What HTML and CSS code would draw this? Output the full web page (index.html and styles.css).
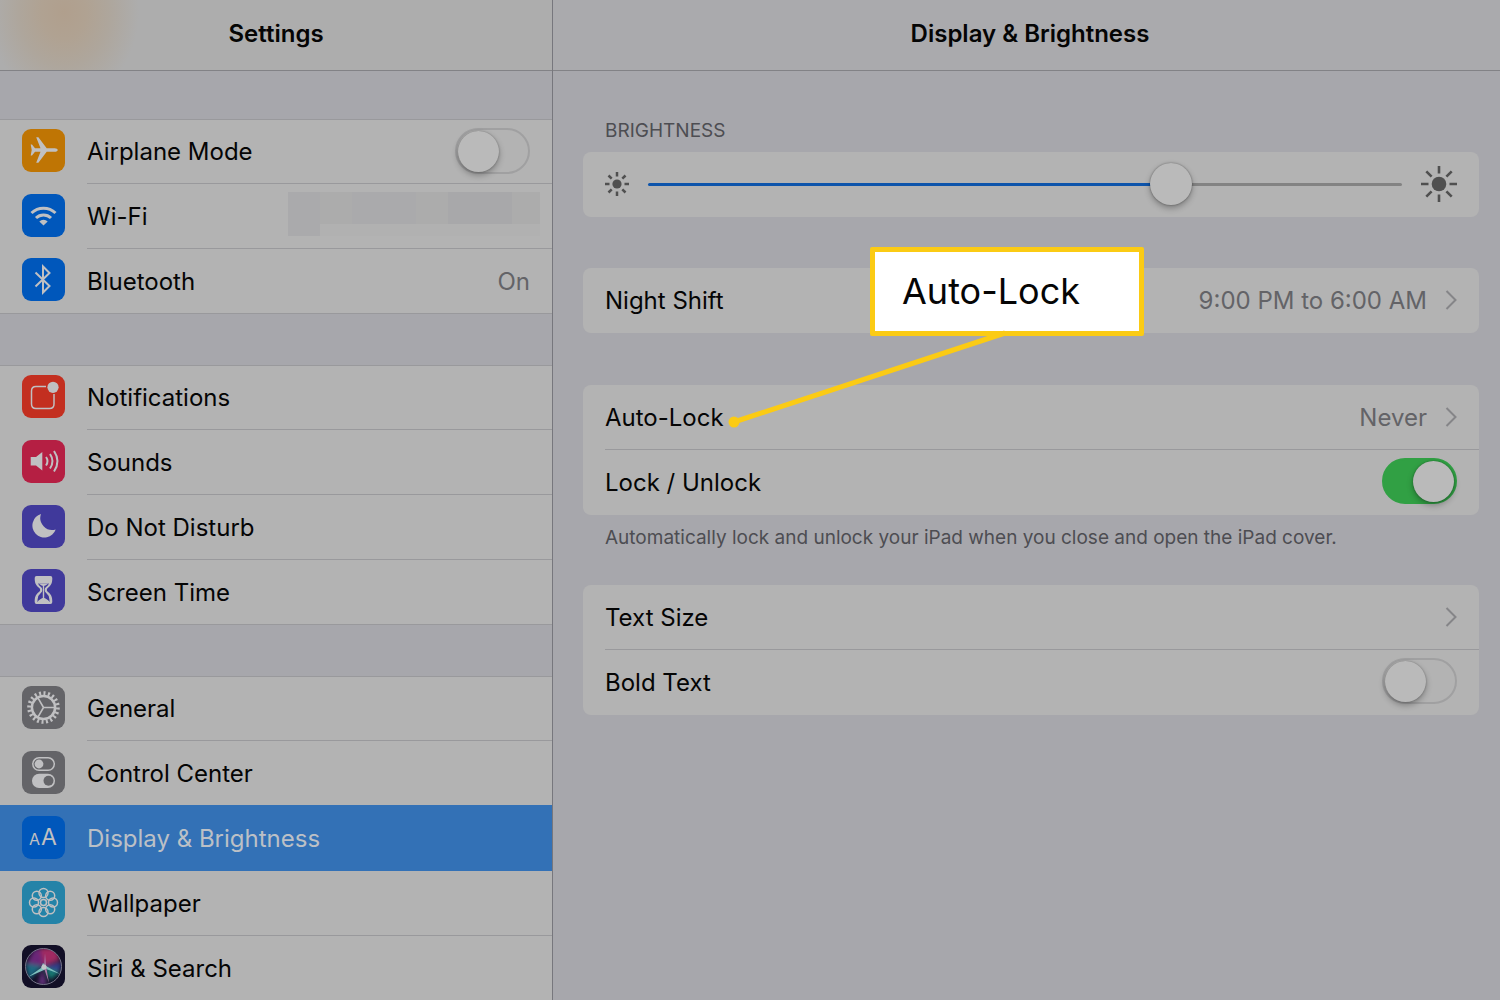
FILE: index.html
```html
<!DOCTYPE html>
<html lang="en">
<head>
<meta charset="utf-8">
<meta name="viewport" content="width=device-width, initial-scale=1">
<title>Settings</title>
<link rel="stylesheet" href="styles.css">
</head>
<body>
<div class="app">
  <aside class="sidebar">
    <header class="bar bar-left"><h1>Settings</h1></header>
    <nav class="menu">
      <section class="group">
        <div class="row">
          <svg class="icon orange" viewBox="0 0 43 43"><path d="M35.700 21c0 1.100-1.200 1.800-3 1.800h-8L16.400 33.700h-2.200L18.500 22.800h-5.500l-3 3.700H8.700l1-5.500-1-5.500H10l3 3.700h5.500L14.200 8.300h2.200L24.700 19.200h8c1.800 0 3 .7 3 1.800z"/></svg>
          <div class="line"><label for="airplane">Airplane Mode</label><input class="switch" type="checkbox" id="airplane"></div>
        </div>
        <a class="row" href="#wifi">
          <svg class="icon blue" viewBox="0 0 43 43"><g class="stroke s3"><path d="M9.500 19a17.500 17.500 0 0 1 24 0M14 24a10.800 10.800 0 0 1 15 0"/></g><path d="M17.300 27.500a6 6 0 0 1 8.400 0L21.500 31.500z"/></svg>
          <div class="line"><span>Wi-Fi</span><span class="mosaic"><i class="m2"></i><i class="m1"></i><i class="m2"></i><i class="m2"></i><i class="m1"></i><i class="m3"></i><i class="m3"></i><i class="m1"></i></span></div>
        </a>
        <a class="row" href="#bluetooth">
          <svg class="icon blue" viewBox="0 0 43 43"><path class="stroke s2" d="M13.500 14.500l14 13.500-6.500 6.500v-26l6.500 6.500-14 13.500"/></svg>
          <div class="line"><span>Bluetooth</span><span class="value">On</span></div>
        </a>
      </section>
      <section class="group">
        <a class="row" href="#notifications">
          <svg class="icon red" viewBox="0 0 43 43"><path class="stroke s1" d="M24 11.500h-10q-4.500 0-4.500 4.500v13q0 4.500 4.500 4.500h13.500q4.500 0 4.500-4.500v-10"/><circle cx="31" cy="12.300" r="5.600"/></svg>
          <div class="line"><span>Notifications</span></div>
        </a>
        <a class="row" href="#sounds">
          <svg class="icon pink" viewBox="0 0 43 43"><path d="M8.700 17h5.300l6.300-5v18.500l-6.300-5H8.700z"/><path class="stroke s2" d="M24 17q3 4 0 8.500M28 14q5 7.200 0 14.500M32 11q7 10.200 0 20.500"/></svg>
          <div class="line"><span>Sounds</span></div>
        </a>
        <a class="row" href="#dnd">
          <svg class="icon purple" viewBox="0 0 43 43"><path d="M19 9a12 12 0 1 0 14.700 15.500A12 12 0 0 1 19 9z"/></svg>
          <div class="line"><span>Do Not Disturb</span></div>
        </a>
        <a class="row" href="#screentime">
          <svg class="icon purple" viewBox="0 0 43 43"><path fill-rule="evenodd" d="M14.500 7h14q1.800 0 1.800 2c0 5.500-1.300 7.500-4.300 9.700q-2.400 2.200 0 4.400c3 2.200 4.300 4.400 4.300 9.900q0 2-1.800 2h-14q-1.800 0-1.800-2c0-5.500 1.300-7.700 4.300-9.900q2.400-2.200 0-4.400C14 16.500 12.700 14.500 12.700 9q0-2 1.800-2zM16 14.500h11q-1 2.200-3 3.500-1.300 1.200-1.300 3 0 1.800 1.500 3 2.800 2 3.200 6.500l.1 2.500h-12l.1-2.500q.4-4.500 3.200-6.500 1.500-1.200 1.500-3 0-1.800-1.300-3-2-1.300-3-3.500z"/><path d="M16.500 14.500h10l-3.500 2.300h-3zM20.800 16h1.400v13h-1.400zM15.500 33q.5-2 6-4.500 5.500 2.500 6 4.500z"/></svg>
          <div class="line"><span>Screen Time</span></div>
        </a>
      </section>
      <section class="group">
        <a class="row" href="#general">
          <svg class="icon gray" viewBox="0 0 43 43"><g class="stroke"><circle cx="21.500" cy="21.500" r="14.300" stroke-width="4" pathLength="40" stroke-dasharray=".9 1.100"/><circle cx="21.500" cy="21.500" r="11.600" stroke-width="2.500"/><path stroke-width="1.600" d="M21.500 21.500h12M21.500 21.500l-6-10.400M21.500 21.500l-6 10.400"/></g></svg>
          <div class="line"><span>General</span></div>
        </a>
        <a class="row" href="#controlcenter">
          <svg class="icon gray" viewBox="0 0 43 43"><rect class="stroke s1" x="10.800" y="6.800" width="21.500" height="12.500" rx="6.200"/><circle cx="17" cy="13" r="4.400"/><rect x="10" y="22.700" width="23" height="14.300" rx="7.100"/><circle class="hole" cx="26.500" cy="29.800" r="5"/></svg>
          <div class="line"><span>Control Center</span></div>
        </a>
        <a class="row selected" href="#display" aria-current="page">
          <svg class="icon blue" viewBox="0 0 43 43"><text x="7" y="29" font-size="16">A</text><text x="19" y="29" font-size="23">A</text></svg>
          <div class="line"><span>Display &amp; Brightness</span></div>
        </a>
        <a class="row" href="#wallpaper">
          <svg class="icon cyan" viewBox="0 0 43 43"><g class="stroke s1"><circle cx="21.500" cy="21.500" r="3"/><circle cx="31" cy="21.500" r="4.500"/><circle cx="28.200" cy="28.200" r="4.500"/><circle cx="21.500" cy="31" r="4.500"/><circle cx="14.800" cy="28.200" r="4.500"/><circle cx="12" cy="21.500" r="4.500"/><circle cx="14.800" cy="14.800" r="4.500"/><circle cx="21.500" cy="12" r="4.500"/><circle cx="28.200" cy="14.800" r="4.500"/></g></svg>
          <div class="line"><span>Wallpaper</span></div>
        </a>
        <a class="row" href="#siri">
          <svg class="icon siri" viewBox="0 0 43 43">
            <defs>
              <filter id="soft" x="-30%" y="-30%" width="160%" height="160%"><feGaussianBlur stdDeviation="2.200"/></filter>
              <clipPath id="orb"><circle cx="21.500" cy="21.500" r="18"/></clipPath>
            </defs>
            <g clip-path="url(#orb)">
              <g filter="url(#soft)">
                <path fill="#6a2678" d="M4 20L12 4h16l-6 18z"/>
                <path fill="#a02a62" d="M18 3h16l4 12-16 6z"/>
                <path fill="#1a6880" d="M3 18l18 3-14 14z"/>
                <path fill="#34408c" d="M22 21l18-4-3 12z"/>
                <path fill="#187a72" d="M22 22l16 5-10 8z"/>
                <path fill="#63307c" d="M20 23l5 17h-9z"/>
              </g>
              <path fill="#7ec0bd" d="M21 18l3 3 14 8-14-5-2 1-16 7 13-9z"/>
              <path fill="#ac78a8" d="M23 8l1 13 3 17-5-15z"/>
              <circle cx="22" cy="22" r="2.500" fill="#c4c4c8"/>
            </g>
            <circle cx="21.500" cy="21.500" r="18" fill="none" stroke="#77768a" stroke-width="1"/>
          </svg>
          <div class="line"><span>Siri &amp; Search</span></div>
        </a>
      </section>
    </nav>
  </aside>

  <main class="detail">
    <header class="bar"><h2>Display &amp; Brightness</h2></header>
    <div class="content">
      <label class="caption" for="brightness">BRIGHTNESS</label>
      <section class="card slider-row">
        <svg class="sun-small" viewBox="0 0 24 24"><circle cx="12" cy="12" r="4.600"/><path d="M12 0v4.500M12 19.500V24M0 12h4.500M19.500 12H24M3.500 3.500l3.200 3.200M17.300 17.300l3.200 3.200M3.500 20.500l3.200-3.200M17.300 6.700l3.200-3.200" stroke-width="2.500"/></svg>
        <input class="slider" type="range" id="brightness" min="0" max="1000" value="705">
        <svg class="sun-large" viewBox="0 0 36 36"><circle cx="18" cy="18" r="7.300"/><path d="M18 0v7.500M18 28.500V36M0 18h7.500M28.500 18H36M5.300 5.300l5.300 5.300M25.400 25.400l5.300 5.300M5.300 30.700l5.300-5.300M25.400 10.600l5.300-5.300" stroke-width="2.600"/></svg>
      </section>

      <section class="card">
        <a class="item" href="#nightshift"><span>Night Shift</span><span class="value">9:00 PM to 6:00 AM</span><svg class="chevron" viewBox="0 0 12 20"><path d="M1.500 1l9 9-9 9"/></svg></a>
      </section>

      <div class="anchor">
        <section class="card">
          <a class="item" href="#autolock"><span>Auto-Lock</span><span class="value">Never</span><svg class="chevron" viewBox="0 0 12 20"><path d="M1.500 1l9 9-9 9"/></svg></a>
          <div class="item"><label for="lock">Lock / Unlock</label><input class="switch" type="checkbox" id="lock" checked></div>
        </section>
        <div class="callout">
          <div class="callout-box">Auto-Lock</div>
          <svg class="callout-line" viewBox="0 0 280 100"><path d="M6 92L277 3"/><circle cx="6" cy="92" r="5.500"/></svg>
        </div>
      </div>
      <p class="note">Automatically lock and unlock your iPad when you close and open the iPad cover.</p>

      <section class="card">
        <a class="item" href="#textsize"><span>Text Size</span><svg class="chevron" viewBox="0 0 12 20"><path d="M1.500 1l9 9-9 9"/></svg></a>
        <div class="item"><label for="bold">Bold Text</label><input class="switch" type="checkbox" id="bold"></div>
      </section>
    </div>
  </main>
</div>
</body>
</html>
```
FILE: styles.css
```css
:root {
  --page: #a7a7ac;
  --card: #b3b3b3;
  --rule: #99999c;
  --muted: #636367;
  --glyph: #c0c0c2;
}

* { box-sizing: border-box; }

body {
  margin: 0;
  background: var(--page);
  color: #050505;
  font: 400 24px/32px Inter, "Liberation Sans", sans-serif;
}

a { color: inherit; text-decoration: none; }

.app {
  display: grid;
  grid-template-columns: minmax(0, 553fr) minmax(0, 947fr);
  height: 100vh;
  overflow: hidden;
}

.sidebar { border-right: 1px solid #77777d; }

.bar {
  display: flex;
  align-items: center;
  justify-content: center;
  height: 71px;
  padding-bottom: 3px;
  border-bottom: 1px solid #828286;
  background: #aaaaad;
}
.bar-left {
  background: radial-gradient(ellipse 75px 90px at 64px 12px, #b09f8d, #b0a292 30%, #aea69c 60%, transparent), #adadad;
}
.bar h1, .bar h2 { margin: 0; font-size: 24px; line-height: 32px; font-weight: 600; }
.bar h2 { padding-left: 7px; }

.menu { display: flex; flex-direction: column; gap: 51px; padding-top: 48px; }

.group { border-top: 1px solid var(--rule); background: var(--card); }
.row { display: flex; align-items: center; height: 65px; padding-left: 22px; gap: 22px; }
.row:first-child { height: 64px; }
.line {
  display: flex;
  flex: 1;
  align-items: center;
  justify-content: space-between;
  height: 100%;
  padding: 1px 22px 0 0;
  border-bottom: 1px solid var(--rule);
}
.group .row:last-child { border-bottom: 1px solid var(--rule); }
.group .row:last-child .line { border-bottom: 0; }
.value { color: var(--muted); }

.selected { position: relative; background: #3371b6; color: #bcc0c6; box-shadow: 0 -1px #3371b6; }
.selected .line { border-color: #3371b6; }

.icon { flex: none; width: 43px; height: 43px; border-radius: 9px; fill: var(--glyph); margin-bottom: 3px; }
.icon text { font-family: Inter, sans-serif; }
.stroke { fill: none; stroke: var(--glyph); }
.s1 { stroke-width: 1.5px; }
.s2 { stroke-width: 2px; }
.s3 { stroke-width: 3px; }
.orange { background: #bf7504; }
.blue { background: #0057bb; }
.red { background: #c32f20; }
.pink { background: #b51f43; }
.purple { background: #40399b; }
.gray { background: #646468; }
.gray .hole { fill: #646468; }
.cyan { background: #2483a8; }
.siri { background: #120f26; }

.mosaic {
  display: flex;
  align-self: flex-start;
  height: 44px;
  margin: 7px -10px 0 0;
  background: #b1b1b1;
}
.mosaic i { width: 32px; height: 32px; }
.mosaic i:first-child { height: 44px; }
.mosaic i:last-child { width: 28px; }
.m1 { background: #acacac; }
.m2 { background: #aaaaac; }
.m3 { background: #a8a8aa; }

.switch {
  appearance: none;
  flex: none;
  width: 75px;
  height: 46px;
  margin: 0 0 3px;
  padding: 2px;
  border: 2px solid #a0a0a1;
  border-radius: 23px;
}
.switch::before {
  content: "";
  display: block;
  width: 41px;
  height: 41px;
  margin: -1px 0 0 -1px;
  border-radius: 50%;
  background: #bababa;
  box-shadow: 0 3px 6px rgba(0, 0, 0, .3), 0 0 2px rgba(0, 0, 0, .3);
}
.switch:checked { border-color: #31a044; background: #31a044; }
.switch:checked::before { margin-left: 27px; }

.content { display: flex; flex-direction: column; padding: 44px 21px 0 30px; }
.caption, .note { padding: 0 22px; color: #4d4d52; font-size: 19px; line-height: 32px; }
.caption { margin-bottom: 5px; }
.note { margin: 7px 0 31px; }
.card { border-radius: 8px; background: var(--card); }

.slider-row { display: flex; align-items: center; height: 65px; margin-bottom: 51px; padding: 0 22px 1px; gap: 19px; }
.slider-row + .card { margin-bottom: 52px; }
.slider-row svg { flex: none; fill: #505050; stroke: #505050; }
.slider-row circle { stroke: none; }
.sun-small { width: 24px; height: 24px; }
.sun-large { width: 36px; height: 36px; }

.slider { appearance: none; flex: 1; min-width: 0; height: 42px; margin: 0; background: transparent; }
.slider::-webkit-slider-runnable-track {
  height: 3px;
  border-radius: 2px;
  background: linear-gradient(90deg, #0d54ab 69%, #838383 69%);
}
.slider::-webkit-slider-thumb {
  appearance: none;
  width: 42px;
  height: 42px;
  margin-top: -20px;
  border-radius: 50%;
  background: #bababa;
  box-shadow: 0 3px 6px rgba(0, 0, 0, .3), 0 0 2px rgba(0, 0, 0, .4);
}

.item { display: flex; align-items: center; height: 65px; padding-right: 22px; margin-left: 22px; }
.item:not(:last-child) { border-bottom: 1px solid var(--rule); padding-top: 1px; }
.item > :first-child { margin-right: auto; }
.chevron { width: 12px; height: 20px; margin: 0 0 2px 18px; fill: none; stroke: #858588; stroke-width: 2px; }

.anchor { position: relative; }
.callout { position: absolute; left: 145px; bottom: 85px; width: 416px; pointer-events: none; }
.callout-box {
  width: 274px;
  margin-left: 142px;
  padding: 20px 27px 21px;
  border: 5px solid #fbcb14;
  border-radius: 2px;
  background: #fff;
  font-size: 36px;
  line-height: 38px;
}
.callout-line { display: block; width: 280px; height: 100px; margin-top: -6px; fill: #fbcb14; }
.callout-line path { stroke: #fbcb14; stroke-width: 5px; }
```
